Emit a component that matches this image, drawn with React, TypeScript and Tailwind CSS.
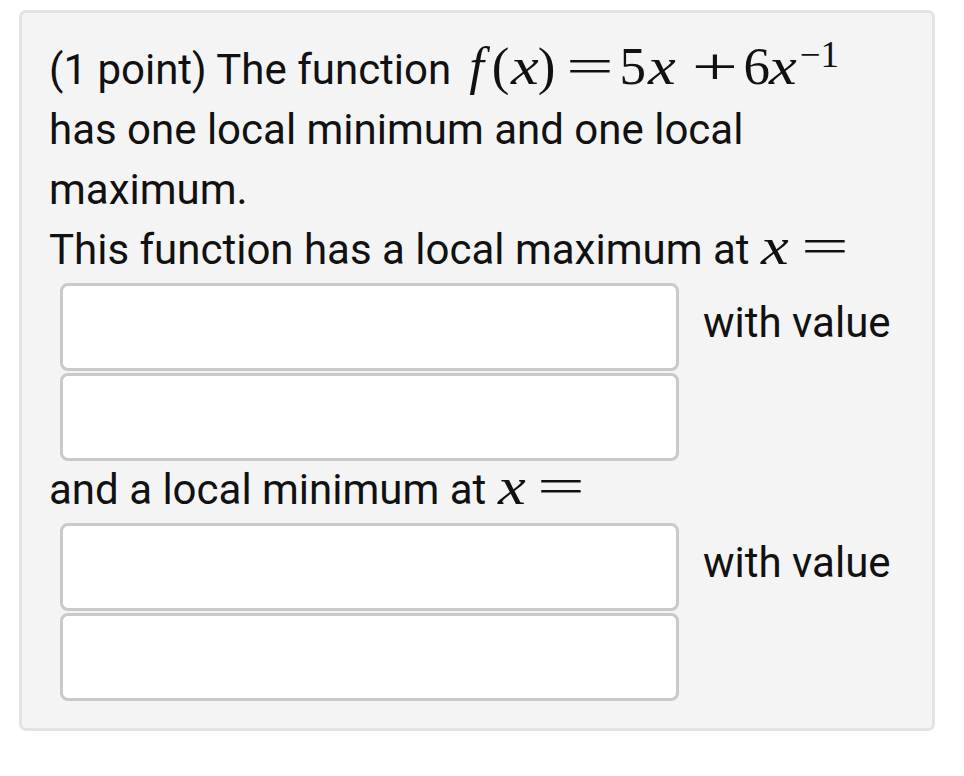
import React from "react";

const serif = { fontFamily: '"Liberation Serif", "DejaVu Serif", serif' };

const G = ({ w, children, className = "" }: { w: string; children: React.ReactNode; className?: string }) => (
  <span className={`inline-flex justify-center ${w} ${className}`}>{children}</span>
);

const Math = ({ children }: { children: React.ReactNode }) => (
  <span className="inline-flex items-baseline text-[53px] leading-none" style={serif}>
    {children}
  </span>
);

const X = () => <i className="inline-block scale-x-[1.18]">x</i>;
const Eq = () => <span className="inline-block scale-x-[1.6] scale-y-[0.95]">=</span>;
const Plus = () => <span className="inline-block scale-x-[1.55]">+</span>;

const XEq = () => (
  <Math>
    <G w="w-[50px]">
      <X />
    </G>
    <G w="w-[50px]">
      <Eq />
    </G>
  </Math>
);

const Box = () => (
  <div className="h-[88px] w-[619px] rounded-[8px] border-[3px] border-[#c9c9c9] bg-white" />
);

export default function App() {
  return (
    <div className="min-h-[776px] w-[964px] bg-white pl-[19px] pt-[10px]" style={{ fontFamily: 'Roboto, "Noto Sans", sans-serif' }}>
      <div className="w-[916px] rounded-[7px] border-[3px] border-[#e3e3e3] bg-[#f4f4f4] px-[27px] pb-[27px] pt-[27px] text-[42px] leading-[60px] text-[#111]">
        <div className="whitespace-nowrap">
          (1 point) The function{" "}
          <Math>
            <G w="w-[30px]"><i>f</i></G>
            <G w="w-[18px]">(</G>
            <G w="w-[31px]"><X /></G>
            <G w="w-[12px]">)</G>
            <G w="w-[74px]"><Eq /></G>
            <G w="w-[12px]">5</G>
            <G w="w-[46px]"><X /></G>
            <G w="w-[60px]"><Plus /></G>
            <G w="w-[24px]">6</G>
            <G w="w-[29px]"><X /></G>
            <span className="relative -top-[17px] ml-[2px] text-[37px]">−1</span>
          </Math>
        </div>
        <div>has one local minimum and one local</div>
        <div>maximum.</div>
        <div className="whitespace-nowrap">
          This function has a local maximum at
          <XEq />
        </div>
        <div className="mt-[3px] flex items-start gap-[24px] pl-[11px]">
          <div className="flex flex-col gap-[2px]">
            <Box />
            <Box />
          </div>
          <div className="pt-[10px]">with value</div>
        </div>
        <div className="-mt-[1px] whitespace-nowrap">
          and a local minimum at
          <XEq />
        </div>
        <div className="mt-[3px] flex items-start gap-[24px] pl-[11px]">
          <div className="flex flex-col gap-[2px]">
            <Box />
            <Box />
          </div>
          <div className="pt-[10px]">with value</div>
        </div>
      </div>
    </div>
  );
}
